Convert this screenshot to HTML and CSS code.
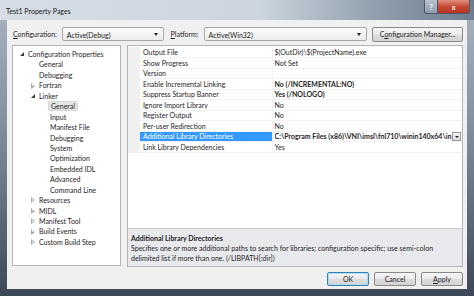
FILE: index.html
```html
<!DOCTYPE html>
<html lang="en">
<head>
    <meta charset="UTF-8">
    <title>Test1 Property Pages</title>
    <link rel="stylesheet" href="styles.css">
</head>
<body>
    <div class="window">
        <div class="titlebar">
            <span class="title">Test1 Property Pages</span>
            <div class="caption-btns">
                <span class="help">?</span>
                <span class="close">x</span>
            </div>
        </div>

        <div class="client">
            <div class="config-row">
                <span class="lbl"><u>C</u>onfiguration:</span>
                <div class="combo combo-config">Active(Debug)<span class="arrow"></span></div>
                <span class="lbl"><u>P</u>latform:</span>
                <div class="combo combo-platform">Active(Win32)<span class="arrow"></span></div>
                <button class="btn btn-manager">C<u>o</u>nfiguration Manager...</button>
            </div>

            <div class="main">
                <ul class="tree">
                    <li class="lv0"><span class="tw open"></span>Configuration Properties</li>
                    <li class="lv1"><span class="tw"></span>General</li>
                    <li class="lv1"><span class="tw"></span>Debugging</li>
                    <li class="lv1"><span class="tw closed"></span>Fortran</li>
                    <li class="lv1"><span class="tw open"></span>Linker</li>
                    <li class="lv2"><span class="tw"></span><span class="sel">General</span></li>
                    <li class="lv2"><span class="tw"></span>Input</li>
                    <li class="lv2"><span class="tw"></span>Manifest File</li>
                    <li class="lv2"><span class="tw"></span>Debugging</li>
                    <li class="lv2"><span class="tw"></span>System</li>
                    <li class="lv2"><span class="tw"></span>Optimization</li>
                    <li class="lv2"><span class="tw"></span>Embedded IDL</li>
                    <li class="lv2"><span class="tw"></span>Advanced</li>
                    <li class="lv2"><span class="tw"></span>Command Line</li>
                    <li class="lv1"><span class="tw closed"></span>Resources</li>
                    <li class="lv1"><span class="tw closed"></span>MIDL</li>
                    <li class="lv1"><span class="tw closed"></span>Manifest Tool</li>
                    <li class="lv1"><span class="tw closed"></span>Build Events</li>
                    <li class="lv1"><span class="tw closed"></span>Custom Build Step</li>
                </ul>

                <div class="grid">
                    <table class="props">
                        <tr><td class="gut"></td><td class="name">Output File</td><td class="val">$(OutDir)\$(ProjectName).exe</td></tr>
                        <tr><td class="gut"></td><td class="name">Show Progress</td><td class="val">Not Set</td></tr>
                        <tr><td class="gut"></td><td class="name">Version</td><td class="val"></td></tr>
                        <tr><td class="gut"></td><td class="name">Enable Incremental Linking</td><td class="val bold">No (/INCREMENTAL:NO)</td></tr>
                        <tr><td class="gut"></td><td class="name">Suppress Startup Banner</td><td class="val bold">Yes (/NOLOGO)</td></tr>
                        <tr><td class="gut"></td><td class="name">Ignore Import Library</td><td class="val">No</td></tr>
                        <tr><td class="gut"></td><td class="name">Register Output</td><td class="val">No</td></tr>
                        <tr><td class="gut"></td><td class="name">Per-user Redirection</td><td class="val">No</td></tr>
                        <tr class="active"><td class="gut"></td><td class="name">Additional Library Directories</td><td class="val bold"><div class="edit"><span class="edit-text">C:\Program Files (x86)\VNI\imsl\fnl710\winin140x64\in</span><span class="drop"></span></div></td></tr>
                        <tr><td class="gut"></td><td class="name">Link Library Dependencies</td><td class="val">Yes</td></tr>
                    </table>
                    <div class="desc">
                        <div class="desc-title">Additional Library Directories</div>
                        <div class="desc-text">Specifies one or more additional paths to search for libraries; configuration specific; use semi-colon delimited list if more than one. (/LIBPATH[:dir])</div>
                    </div>
                </div>
            </div>

            <div class="buttons">
                <button class="btn default">OK</button>
                <button class="btn">Cancel</button>
                <button class="btn"><u>A</u>pply</button>
            </div>
        </div>
    </div>
</body>
</html>
```

FILE: styles.css
```css
body {
    margin: 0;
    font-family: Lato, 'Open Sans', sans-serif;
    font-size: 7px;
    color: #1e1e1e;
    background: #3e4a5a;
}

u {
    text-decoration: underline;
    text-underline-offset: 1px;
}

.window {
    width: 474px;
    height: 296px;
    display: flex;
    flex-direction: column;
    background: linear-gradient(to bottom, #aab6c2 0%, #7e8c9b 45%, #3c4858 100%);
}

.titlebar {
    height: 20px;
    display: flex;
    align-items: flex-start;
    justify-content: space-between;
    background: linear-gradient(to right, #d6dde5 0%, #ccd5de 55%, #8f9dac 80%, #6d7d8e 100%);
}

.title {
    margin: 7px 0 0 6px;
    color: #1a1a1a;
}

.caption-btns {
    display: flex;
    margin-right: 4px;
}

.help, .close {
    height: 13px;
    display: flex;
    align-items: center;
    justify-content: center;
    color: #fff;
    font-weight: bold;
    font-size: 7px;
    border: 1px solid #4b5866;
    border-top: none;
}

.help {
    width: 12px;
    background: linear-gradient(to bottom, #b7c3cf, #8e9cab);
    border-radius: 0 0 0 3px;
}

.close {
    width: 31px;
    background: linear-gradient(to bottom, #e48f80, #c54a36 50%, #b8321e);
    border-left: none;
    border-radius: 0 0 3px 0;
}

.client {
    flex: 1;
    margin: 0 7px 7px 7px;
    background: #f0f0f0;
    display: flex;
    flex-direction: column;
    padding: 6px 4px 0 5px;
}

.config-row {
    display: flex;
    align-items: center;
    height: 16px;
}

.lbl {
    margin-left: 1px;
}

.combo {
    position: relative;
    height: 14px;
    line-height: 14px;
    box-sizing: border-box;
    padding-left: 4px;
    border: 1px solid #a8a8a8;
    border-radius: 2px;
    background: linear-gradient(to bottom, #fafafa, #ececec);
}

.combo-config {
    width: 102px;
    margin: 0 6px 0 5px;
}

.combo-platform {
    width: 164px;
    margin: 0 5px 0 5px;
}

.arrow {
    position: absolute;
    right: 5px;
    top: 5px;
    border-left: 2.5px solid transparent;
    border-right: 2.5px solid transparent;
    border-top: 3px solid #222;
}

.btn {
    font-family: inherit;
    font-size: 7px;
    color: #1e1e1e;
    height: 15px;
    padding: 0;
    border: 1px solid #8a8a8a;
    border-radius: 2px;
    background: linear-gradient(to bottom, #f6f6f6 0%, #ebebeb 48%, #dddddd 52%, #d3d3d3 100%);
}

.btn-manager {
    width: 91px;
}

.main {
    flex: 1;
    display: flex;
    margin-top: 3px;
    gap: 6px;
}

.tree {
    width: 109px;
    margin: 0;
    padding: 3px 0 0 0;
    list-style: none;
    background: #fff;
    border: 1px solid #b5b5b5;
    box-sizing: border-box;
    height: 221px;
}

.tree li {
    height: 10.45px;
    line-height: 10.45px;
    white-space: nowrap;
    display: flex;
    align-items: center;
}

.lv0 { padding-left: 6px; }
.lv1 { padding-left: 17px; }
.lv2 { padding-left: 28px; }

.tw {
    width: 9px;
    height: 6px;
    flex: none;
    position: relative;
}

.tw.open::before {
    content: '';
    position: absolute;
    left: 1px;
    top: 1px;
    border-left: 4px solid transparent;
    border-bottom: 4px solid #3c3c3c;
}

.tw.closed::before {
    content: '';
    position: absolute;
    left: 1px;
    top: 0;
    border-top: 3px solid transparent;
    border-bottom: 3px solid transparent;
    border-left: 4px solid #a6a6a6;
}

.tw.closed::after {
    content: '';
    position: absolute;
    left: 2px;
    top: 1.5px;
    border-top: 1.5px solid transparent;
    border-bottom: 1.5px solid transparent;
    border-left: 2px solid #fff;
}

.sel {
    margin-left: -2px;
    padding: 0 2px;
    background: #e6e6e6;
    border: 1px solid #d6d6d6;
    border-radius: 2px;
    line-height: 8px;
}

.grid {
    flex: 1;
    display: flex;
    flex-direction: column;
    border: 1px solid #b5b5b5;
    background: #fff;
    height: 222px;
    box-sizing: border-box;
}

.props {
    width: 100%;
    border-collapse: collapse;
    table-layout: fixed;
    margin-top: 1px;
}

.props td {
    height: 10.5px;
    padding: 0;
    border-bottom: 1px solid #f2f2f2;
    white-space: nowrap;
    overflow: hidden;
    box-sizing: border-box;
}

.props .gut {
    width: 12px;
    background: #f0f0f0;
    border-bottom-color: #f0f0f0;
}

.props .name {
    width: 132px;
    padding-left: 3px;
    border-right: 1px solid #f0f0f0;
}

.props .val {
    padding-left: 2px;
}

.bold {
    font-weight: bold;
}

.active .name {
    background: #3399ff;
    color: #fff;
}

.edit {
    display: flex;
    align-items: center;
}

.edit-text {
    flex: 1;
    overflow: hidden;
}

.drop {
    flex: none;
    width: 9px;
    height: 9px;
    margin-right: 1px;
    box-sizing: border-box;
    border: 1px solid #9a9a9a;
    background: linear-gradient(to bottom, #f6f6f6, #dcdcdc);
    position: relative;
}

.drop::after {
    content: '';
    position: absolute;
    left: 2px;
    top: 3px;
    border-left: 2px solid transparent;
    border-right: 2px solid transparent;
    border-top: 2px solid #222;
}

.desc {
    margin-top: auto;
    height: 38px;
    box-sizing: border-box;
    padding: 4px 3px 0 3px;
    background: #e8e9ec;
    border-top: 1px solid #c9c9c9;
    line-height: 10px;
}

.desc-title {
    font-weight: bold;
}

.buttons {
    display: flex;
    justify-content: flex-end;
    gap: 5px;
    padding: 5px 0 0 0;
    height: 22px;
    box-sizing: border-box;
}

.buttons .btn {
    width: 42px;
    height: 14px;
}

.btn.default {
    border-color: #3c7fb1;
    box-shadow: inset 0 0 0 1px #a8e0f8;
}
```
